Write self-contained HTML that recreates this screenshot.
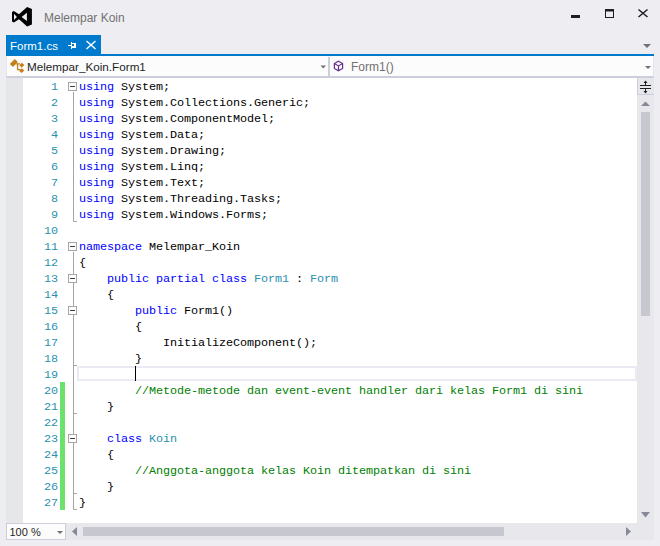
<!DOCTYPE html>
<html><head><meta charset="utf-8">
<style>
*{margin:0;padding:0;box-sizing:border-box}
html,body{width:660px;height:546px;overflow:hidden;background:#EEEEF2;font-family:"Liberation Sans",sans-serif;position:relative}
.a{position:absolute}
.ui{font-family:"Liberation Sans",sans-serif;font-size:12px;white-space:pre;line-height:16px}
.code{position:absolute;left:79px;top:79px;font-family:"Liberation Mono",monospace;font-size:11.8px;letter-spacing:-0.08px;line-height:16px;white-space:pre;color:#000}
.ln{position:absolute;left:22px;width:36px;top:79px;font-family:"Liberation Mono",monospace;font-size:11.8px;letter-spacing:-0.08px;line-height:16px;white-space:pre;color:#2B91AF;text-align:right}
.k{color:#0000FF}
.t{color:#2B91AF}
.c{color:#008000}
</style></head><body>
<!-- title bar -->
<svg class="a" style="left:0;top:0" width="660" height="34">
  <path fill="#000" fill-rule="evenodd" d="M13.8 10.9 L19 14.2 L27.1 7 L31.9 9 L31.9 24.6 L27.1 26.6 L19 19.3 L13.8 22.6 L12 21.6 L12 11.9 Z M14 13.8 L16.9 16.9 L14 20 Z M21.6 16.9 L26.9 12.8 L26.9 21.1 Z"/>
  <rect x="571" y="15" width="9" height="3" fill="#1E1E1E"/>
  <rect x="605.5" y="9.5" width="8" height="8" fill="none" stroke="#1E1E1E" stroke-width="1"/>
  <rect x="605" y="9" width="9" height="2.5" fill="#1E1E1E"/>
  <path d="M638.5 9.5 L647.5 17 M647.5 9.5 L638.5 17" stroke="#1E1E1E" stroke-width="1.5"/>
</svg>
<div class="a ui" style="left:44px;top:10px;color:#717171">Melempar Koin</div>

<!-- tab -->
<div class="a" style="left:6px;top:35px;width:95px;height:21px;background:#007ACC"></div>
<div class="a" style="left:6px;top:54px;width:648px;height:2px;background:#007ACC"></div>
<div class="a ui" style="left:10px;top:38px;font-size:11.5px;color:#fff">Form1.cs</div>
<svg class="a" style="left:0;top:30px" width="660" height="26">
  <g fill="#fff"><rect x="68" y="15" width="3" height="1"/><rect x="71" y="12" width="1" height="7"/><rect x="72" y="13" width="4" height="1"/><rect x="72" y="16" width="4" height="2"/><rect x="74" y="13" width="2" height="5"/></g>
  <path d="M86.5 11 L95.5 19 M95.5 11 L86.5 19" stroke="#fff" stroke-width="1.4"/>
  <path d="M643 14 L651 14 L647 18 Z" fill="#717171"/>
</svg>

<!-- nav bar -->
<div class="a" style="left:6px;top:56px;width:648px;height:22px;background:#FCFCFC;border:1px solid #E4E4EC;border-bottom:2px solid #CCCEDB;border-top:none"></div>
<div class="a" style="left:328px;top:57px;width:2px;height:19px;background:#CCCEDB"></div>
<svg class="a" style="left:0;top:56px" width="660" height="22">
  <g fill="#C47E1A">
    <path d="M9.8 7.9 L14.8 2.9 L17.9 6 L12.9 11 Z"/>
    <path d="M19.3 9.3 L21.9 6.8 L24.3 9.1 L21.7 11.7 Z"/>
    <path d="M19.1 14.9 L21.8 12.2 L24.3 14.5 L21.6 17.1 Z"/>
  </g>
  <path d="M15.5 7.9 L20 7.9 M17.6 7.9 L17.6 13.6 L20.5 13.6" stroke="#C47E1A" stroke-width="1.3" fill="none"/>
  <path d="M320.5 9.5 L326 9.5 L323.25 12.5 Z" fill="#717171"/>
  <path d="M645 10 L651 10 L648 13 Z" fill="#717171"/>
  <g stroke="#652D90" stroke-width="1.2" fill="none">
    <path d="M338.5 5.3 L342.6 7.6 L342.6 12.4 L338.5 14.7 L334.4 12.4 L334.4 7.6 Z"/>
    <path d="M334.4 7.6 L338.5 9.9 L342.6 7.6 M338.5 9.9 L338.5 14.7"/>
  </g>
</svg>
<div class="a ui" style="left:27px;top:59px;font-size:11.7px;color:#1E1E1E">Melempar_Koin.Form1</div>
<div class="a ui" style="left:351px;top:59px;color:#717171">Form1()</div>

<!-- editor -->
<div class="a" style="left:6px;top:78px;width:17px;height:445px;background:#E6E7E8"></div>
<div class="a" style="left:23px;top:78px;width:614px;height:445px;background:#FFFFFF"></div>

<!-- current line -->
<div class="a" style="left:77px;top:366px;width:560px;height:15px;border:2px solid #EAEAF2"></div>
<div class="a" style="left:135px;top:366px;width:1px;height:15px;background:#000"></div>

<!-- track changes -->
<div class="a" style="left:60px;top:382px;width:5px;height:128px;background:#6CE26C"></div>

<!-- outlining -->
<svg class="a" style="left:0;top:78px" width="80" height="445">
  <g stroke="#A5A5A5" stroke-width="1" fill="none">
    <path d="M73.5 14 L73.5 143.5 L77 143.5"/>
    <path d="M73.5 174 L73.5 431.5 L77 431.5 M73.5 287.5 L77 287.5 M73.5 335.5 L77 335.5 M73.5 415.5 L77 415.5"/>
    <rect x="68.5" y="4.5" width="8" height="8" fill="#fff"/>
    <rect x="68.5" y="164.5" width="8" height="8" fill="#fff"/>
    <rect x="68.5" y="196.5" width="8" height="8" fill="#fff"/>
    <rect x="68.5" y="228.5" width="8" height="8" fill="#fff"/>
    <rect x="68.5" y="356.5" width="8" height="8" fill="#fff"/>
  </g>
  <g stroke="#3A3A3A" stroke-width="1">
    <path d="M70 8.5 L75 8.5 M70 168.5 L75 168.5 M70 200.5 L75 200.5 M70 232.5 L75 232.5 M70 360.5 L75 360.5"/>
  </g>
</svg>

<div class="ln">1
2
3
4
5
6
7
8
9
10
11
12
13
14
15
16
17
18
19
20
21
22
23
24
25
26
27</div>

<div class="code"><span class="k">using</span> System;
<span class="k">using</span> System.Collections.Generic;
<span class="k">using</span> System.ComponentModel;
<span class="k">using</span> System.Data;
<span class="k">using</span> System.Drawing;
<span class="k">using</span> System.Linq;
<span class="k">using</span> System.Text;
<span class="k">using</span> System.Threading.Tasks;
<span class="k">using</span> System.Windows.Forms;

<span class="k">namespace</span> Melempar_Koin
{
    <span class="k">public</span> <span class="k">partial</span> <span class="k">class</span> <span class="t">Form1</span> : <span class="t">Form</span>
    {
        <span class="k">public</span> Form1()
        {
            InitializeComponent();
        }

        <span class="c">//Metode-metode dan event-event handler dari kelas Form1 di sini</span>
    }

    <span class="k">class</span> <span class="t">Koin</span>
    {
        <span class="c">//Anggota-anggota kelas Koin ditempatkan di sini</span>
    }
}</div>

<!-- vertical scrollbar -->
<div class="a" style="left:637px;top:78px;width:17px;height:445px;background:#E8E8EC"></div>
<div class="a" style="left:637px;top:78px;width:17px;height:17px;background:#E6E7ED;border-left:1px solid #CCCEDB;border-bottom:1px solid #CCCEDB"></div>
<svg class="a" style="left:637px;top:78px" width="17" height="445">
  <path d="M3 7.5 L14 7.5 M3 10.5 L14 10.5 M8.5 4 L8.5 7 M8.5 11 L8.5 14" stroke="#1E1E1E" stroke-width="1"/>
  <path d="M6.5 5 L8.5 2.5 L10.5 5 Z M6.5 13 L8.5 15.5 L10.5 13 Z" fill="#1E1E1E"/>
  <path d="M4 28 L8.5 23.5 L13 28 Z" fill="#868999"/>
  <rect x="4" y="34" width="9" height="204" fill="#C7C8CF"/>
  <path d="M4 434 L13 434 L8.5 439.5 Z" fill="#868999"/>
</svg>

<!-- bottom bar -->
<div class="a" style="left:6px;top:523px;width:60px;height:17px;background:#FCFCFC;border:1px solid #CCCEDB"></div>
<div class="a ui" style="left:9.5px;top:524px;font-size:11px;color:#1E1E1E">100 %</div>
<svg class="a" style="left:0;top:523px" width="660" height="17">
  <path d="M57 8 L63 8 L60 11 Z" fill="#717171"/>
</svg>
<div class="a" style="left:66px;top:523px;width:588px;height:17px;background:#E8E8EC"></div>
<svg class="a" style="left:0;top:523px" width="660" height="17">
  <path d="M77 4 L77 13 L72 8.5 Z" fill="#868999"/>
  <rect x="83" y="4" width="421" height="9" fill="#C7C8CF"/>
  <path d="M626 4 L626 13 L631 8.5 Z" fill="#868999"/>
</svg>
</body></html>
